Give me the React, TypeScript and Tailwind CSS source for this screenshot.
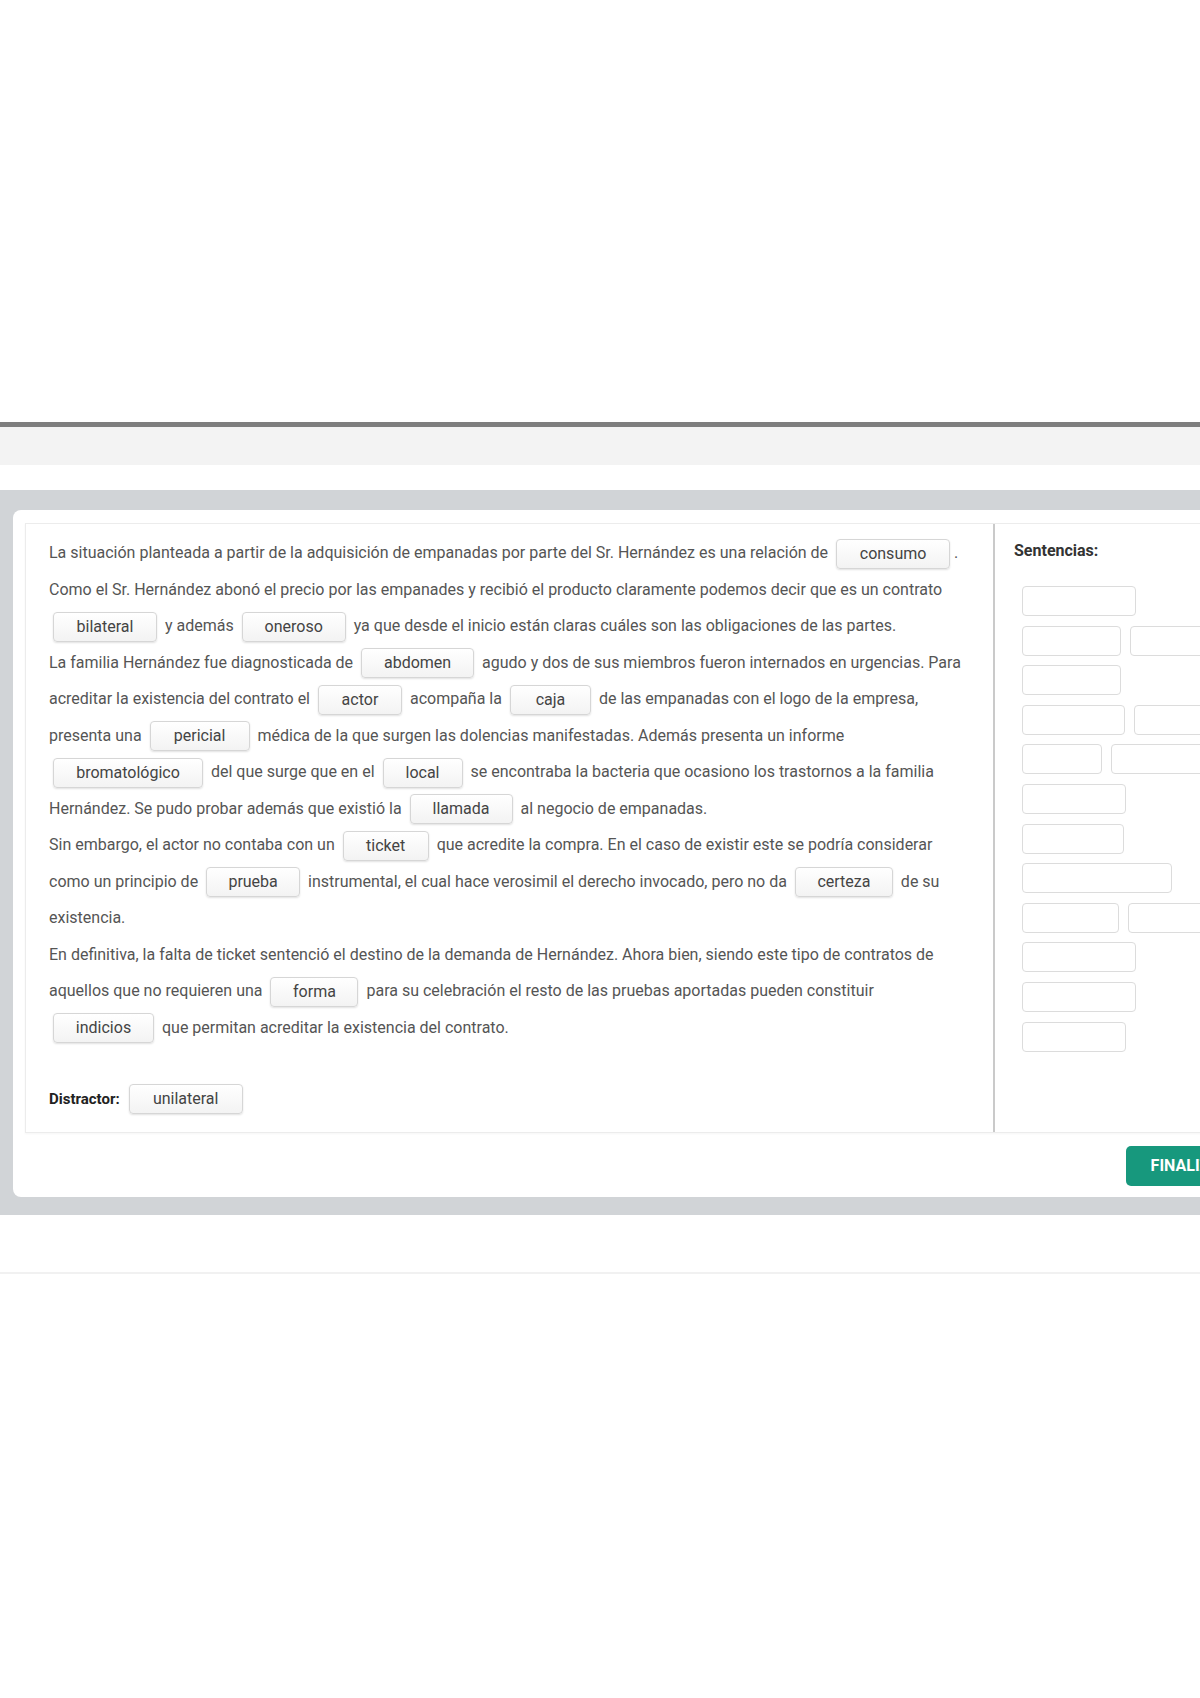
import React from 'react';

type Part = string | { t: string; w: string };

const lines: Part[][] = [
  ['La situación planteada a partir de la adquisición de empanadas por parte del Sr. Hernández es una relación de', { t: 'consumo', w: 'w-[114px]' }, '.'],
  ['Como el Sr. Hernández abonó el precio por las empanades y recibió el producto claramente podemos decir que es un contrato'],
  [{ t: 'bilateral', w: 'w-[104px]' }, 'y además', { t: 'oneroso', w: 'w-[104px]' }, 'ya que desde el inicio están claras cuáles son las obligaciones de las partes.'],
  ['La familia Hernández fue diagnosticada de', { t: 'abdomen', w: 'w-[113px]' }, 'agudo y dos de sus miembros fueron internados en urgencias. Para'],
  ['acreditar la existencia del contrato el', { t: 'actor', w: 'w-[84px]' }, 'acompaña la', { t: 'caja', w: 'w-[81px]' }, 'de las empanadas con el logo de la empresa,'],
  ['presenta una', { t: 'pericial', w: 'w-[100px]' }, 'médica de la que surgen las dolencias manifestadas. Además presenta un informe'],
  [{ t: 'bromatológico', w: 'w-[150px]' }, 'del que surge que en el', { t: 'local', w: 'w-[80px]' }, 'se encontraba la bacteria que ocasiono los trastornos a la familia'],
  ['Hernández. Se pudo probar además que existió la', { t: 'llamada', w: 'w-[103px]' }, 'al negocio de empanadas.'],
  ['Sin embargo, el actor no contaba con un', { t: 'ticket', w: 'w-[86px]' }, 'que acredite la compra. En el caso de existir este se podría considerar'],
  ['como un principio de', { t: 'prueba', w: 'w-[94px]' }, 'instrumental, el cual hace verosimil el derecho invocado, pero no da', { t: 'certeza', w: 'w-[98px]' }, 'de su'],
  ['existencia.'],
  ['En definitiva, la falta de ticket sentenció el destino de la demanda de Hernández. Ahora bien, siendo este tipo de contratos de'],
  ['aquellos que no requieren una', { t: 'forma', w: 'w-[88px]' }, 'para su celebración el resto de las pruebas aportadas pueden constituir'],
  [{ t: 'indicios', w: 'w-[101px]' }, 'que permitan acreditar la existencia del contrato.'],
];

// empty drop targets on the right, one row per sentence
const slots: string[][] = [
  ['w-[114px]'],
  ['w-[99px]', 'w-[110px]'],
  ['w-[99px]'],
  ['w-[103px]', 'w-[110px]'],
  ['w-[80px]', 'w-[110px]'],
  ['w-[104px]'],
  ['w-[102px]'],
  ['w-[150px]'],
  ['w-[97px]', 'w-[110px]'],
  ['w-[114px]'],
  ['w-[114px]'],
  ['w-[104px]'],
];

const Word = ({ t, w }: { t: string; w: string }) => (
  <span
    className={`${w} mx-1 inline-block h-[30px] rounded-[4px] border border-[#d6d6d6] bg-gradient-to-b from-white to-[#f3f3f3] text-center align-middle text-[16px] leading-[28px] text-[#444] shadow-[0_1px_2px_rgba(0,0,0,0.12)]`}
  >
    {t}
  </span>
);

export default function App() {
  return (
    <div className="min-h-[1698px] w-full overflow-hidden bg-white font-['Roboto','Liberation_Sans',sans-serif]">
      <div className="h-[422px]" />
      <div className="h-[5px] bg-[#7e7e7e]" />
      <div className="h-[38px] bg-[#f3f3f3]" />
      <div className="h-[25px]" />

      <div className="bg-[#d1d4d7] pb-[18px] pl-[13px] pt-[20px]">
        <div className="w-[1254px] rounded-lg bg-white px-[12px] pb-[11px] pt-[13px]">
          {/* Exercise panel */}
          <div className="flex h-[610px] border border-[#ececec] shadow-[0_1px_2px_rgba(0,0,0,0.04)]">
            <div className="w-[967px] pl-[23px] pt-[11px] text-[16px] text-[#555]">
              {lines.map((parts, i) => (
                <div key={i} className="h-[36.5px] whitespace-nowrap leading-[36.5px]">
                  {parts.map((p, j) => (
                    <React.Fragment key={j}>
                      {j > 0 && p !== '.' && ' '}
                      {typeof p === 'string' ? p : <Word t={p.t} w={p.w} />}
                    </React.Fragment>
                  ))}
                </div>
              ))}

              <div className="mt-[38px] flex h-[30px] items-center">
                <span className="text-[15px] font-bold text-[#222]">Distractor:</span>
                <span className="ml-[5px]">
                  <Word t="unilateral" w="w-[114px]" />
                </span>
              </div>
            </div>

            <div className="w-[2px] bg-[#cacaca]" />

            <div className="flex-1 pl-[19px] pt-[17px]">
              <div className="h-[20px] text-[16px] font-bold leading-[20px] text-[#333]">Sentencias:</div>
              <div className="ml-[8px] mt-[25px] flex flex-col gap-[9.6px]">
                {slots.map((row, i) => (
                  <div key={i} className="flex gap-[9px]">
                    {row.map((w, j) => (
                      <div key={j} className={`${w} h-[30px] rounded-[4px] border border-[#dcdcdc] bg-white`} />
                    ))}
                  </div>
                ))}
              </div>
            </div>
          </div>

          <div className="mt-[13px] flex justify-end">
            <button className="h-[40px] w-[129px] rounded-[5px] bg-[#17987d] text-[16px] font-bold text-white">
              FINALIZAR
            </button>
          </div>
        </div>
      </div>

      <div className="h-[57px]" />
      <div className="h-[2px] bg-[#f1f1f1]" />
    </div>
  );
}
